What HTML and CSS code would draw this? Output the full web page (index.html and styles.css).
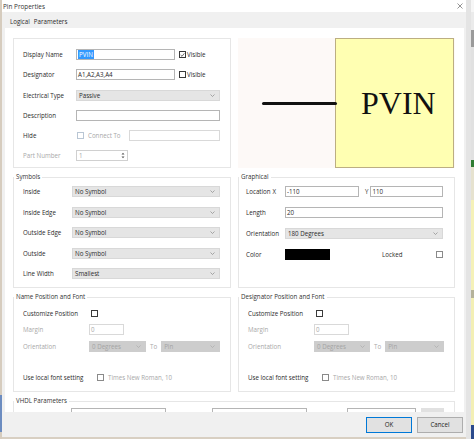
FILE: index.html
```html
<!DOCTYPE html>
<html lang="en">
<head>
    <meta charset="UTF-8">
    <title>Pin Properties</title>
    <link rel="stylesheet" href="styles.css">
</head>
<body>
    <div class="desk-left">
        <div class="bg-tan" style="height:395px"></div>
        <div class="bg-blue" style="height:37px"></div>
        <div class="bg-tan" style="height:7px"></div>
    </div>

    <div class="dialog">
        <div class="titlebar">
            <span>Pin Properties</span>
            <svg class="close" width="6" height="6" viewBox="0 0 6 6"><path d="M0.5 0.5 L5.5 5.5 M5.5 0.5 L0.5 5.5" stroke="#666" stroke-width="0.7"/></svg>
        </div>
        <div class="tabs">
            <span class="tab active">Logical</span>
            <span class="tab">Parameters</span>
        </div>

        <div class="page">
            <div class="layout">
                <!-- main pin fields -->
                <div class="box-main">
                    <span class="lbl">Display Name</span>
                    <div class="fld">
                        <div class="edit w99"><span class="sel">PVIN</span></div>
                        <span class="chk on"><svg width="6" height="6" viewBox="0 0 6 6"><path d="M0.8 3 L2.4 4.6 L5.2 1" fill="none" stroke="#222" stroke-width="0.8"/></svg></span>
                        <span class="chk-txt">Visible</span>
                    </div>

                    <span class="lbl">Designator</span>
                    <div class="fld">
                        <div class="edit w99">A1,A2,A3,A4</div>
                        <span class="chk"></span>
                        <span class="chk-txt">Visible</span>
                    </div>

                    <span class="lbl">Electrical Type</span>
                    <div class="combo"><span>Passive</span><svg width="5" height="3" viewBox="0 0 5 3"><path d="M0.5 0.5 L2.5 2.5 L4.5 0.5" fill="none" stroke="#888" stroke-width="0.7"/></svg></div>

                    <span class="lbl">Description</span>
                    <div class="edit"></div>

                    <span class="lbl">Hide</span>
                    <div class="fld">
                        <span class="chk dis hide-chk"></span>
                        <span class="muted connect">Connect To</span>
                        <div class="edit dis w91"></div>
                    </div>

                    <span class="lbl muted">Part Number</span>
                    <div class="fld">
                        <div class="spin">
                            <span class="muted">1</span>
                            <svg width="6" height="9" viewBox="0 0 6 9"><path d="M1.5 3.5 L3 1.8 L4.5 3.5Z M1.5 5.5 L3 7.2 L4.5 5.5Z" fill="#555"/></svg>
                        </div>
                    </div>
                </div>

                <!-- symbol preview -->
                <div class="preview">
                    <div class="pin-line"></div>
                    <div class="pin-body">PVIN</div>
                </div>

                <fieldset class="group">
                    <legend>Symbols</legend>
                    <div class="rows sym">
                        <span class="lbl">Inside</span>
                        <div class="combo"><span>No Symbol</span><svg width="5" height="3" viewBox="0 0 5 3"><path d="M0.5 0.5 L2.5 2.5 L4.5 0.5" fill="none" stroke="#888" stroke-width="0.7"/></svg></div>
                        <span class="lbl">Inside Edge</span>
                        <div class="combo"><span>No Symbol</span><svg width="5" height="3" viewBox="0 0 5 3"><path d="M0.5 0.5 L2.5 2.5 L4.5 0.5" fill="none" stroke="#888" stroke-width="0.7"/></svg></div>
                        <span class="lbl">Outside Edge</span>
                        <div class="combo"><span>No Symbol</span><svg width="5" height="3" viewBox="0 0 5 3"><path d="M0.5 0.5 L2.5 2.5 L4.5 0.5" fill="none" stroke="#888" stroke-width="0.7"/></svg></div>
                        <span class="lbl">Outside</span>
                        <div class="combo"><span>No Symbol</span><svg width="5" height="3" viewBox="0 0 5 3"><path d="M0.5 0.5 L2.5 2.5 L4.5 0.5" fill="none" stroke="#888" stroke-width="0.7"/></svg></div>
                        <span class="lbl">Line Width</span>
                        <div class="combo"><span>Smallest</span><svg width="5" height="3" viewBox="0 0 5 3"><path d="M0.5 0.5 L2.5 2.5 L4.5 0.5" fill="none" stroke="#888" stroke-width="0.7"/></svg></div>
                    </div>
                </fieldset>

                <fieldset class="group">
                    <legend>Graphical</legend>
                    <div class="rows gfx">
                        <span class="lbl loc"><span>Location</span><span>X</span></span>
                        <div class="fld">
                            <div class="edit w74">-110</div>
                            <span class="y-lbl">Y</span>
                            <div class="edit grow">110</div>
                        </div>
                        <span class="lbl">Length</span>
                        <div class="edit">20</div>
                        <span class="lbl">Orientation</span>
                        <div class="combo"><span>180 Degrees</span><svg width="5" height="3" viewBox="0 0 5 3"><path d="M0.5 0.5 L2.5 2.5 L4.5 0.5" fill="none" stroke="#888" stroke-width="0.7"/></svg></div>
                        <span class="lbl">Color</span>
                        <div class="fld">
                            <span class="swatch"></span>
                            <span class="locked">Locked</span>
                            <span class="chk light push"></span>
                        </div>
                    </div>
                </fieldset>

                <fieldset class="group">
                    <legend>Name Position and Font</legend>
                    <div class="rows pos">
                        <span class="lbl">Customize Position</span>
                        <div class="fld"><span class="chk cust"></span></div>
                        <span class="lbl muted">Margin</span>
                        <div class="fld"><div class="edit dis w35 muted">0</div></div>
                        <span class="lbl muted">Orientation</span>
                        <div class="fld">
                            <div class="combo dis w57"><span>0 Degrees</span><svg width="5" height="3" viewBox="0 0 5 3"><path d="M0.5 0.5 L2.5 2.5 L4.5 0.5" fill="none" stroke="#aaa" stroke-width="0.7"/></svg></div>
                            <span class="muted to">To</span>
                            <div class="combo dis grow"><span>Pin</span><svg width="5" height="3" viewBox="0 0 5 3"><path d="M0.5 0.5 L2.5 2.5 L4.5 0.5" fill="none" stroke="#aaa" stroke-width="0.7"/></svg></div>
                        </div>
                        <span></span><span></span>
                        <span class="lbl">Use local font setting</span>
                        <div class="fld">
                            <span class="chk light font-chk"></span>
                            <span class="muted font-name">Times New Roman, 10</span>
                        </div>
                    </div>
                </fieldset>

                <fieldset class="group">
                    <legend>Designator Position and Font</legend>
                    <div class="rows pos">
                        <span class="lbl">Customize Position</span>
                        <div class="fld"><span class="chk cust"></span></div>
                        <span class="lbl muted">Margin</span>
                        <div class="fld"><div class="edit dis w35 muted">0</div></div>
                        <span class="lbl muted">Orientation</span>
                        <div class="fld">
                            <div class="combo dis w56"><span>0 Degrees</span><svg width="5" height="3" viewBox="0 0 5 3"><path d="M0.5 0.5 L2.5 2.5 L4.5 0.5" fill="none" stroke="#aaa" stroke-width="0.7"/></svg></div>
                            <span class="muted to">To</span>
                            <div class="combo dis grow"><span>Pin</span><svg width="5" height="3" viewBox="0 0 5 3"><path d="M0.5 0.5 L2.5 2.5 L4.5 0.5" fill="none" stroke="#aaa" stroke-width="0.7"/></svg></div>
                        </div>
                        <span></span><span></span>
                        <span class="lbl">Use local font setting</span>
                        <div class="fld">
                            <span class="chk light font-chk"></span>
                            <span class="muted font-name">Times New Roman, 10</span>
                        </div>
                    </div>
                </fieldset>

                <fieldset class="group vhdl">
                    <legend>VHDL Parameters</legend>
                    <div class="vhdl-row">
                        <div class="edit w95"></div>
                        <div class="edit w95 gap46"></div>
                        <div class="edit w69 gap40"></div>
                        <span class="mini-btn"></span>
                    </div>
                </fieldset>
            </div>
        </div>

        <div class="footer">
            <button class="btn default">OK</button>
            <button class="btn">Cancel</button>
        </div>
    </div>

    <div class="desk-right">
        <div class="shade"></div>
        <div class="strip">
            <div style="height:12px;background:#f6f6f6"></div>
            <div style="height:18px;background:#ebebeb"></div>
            <div style="height:17px;background:#9a9a9a"></div>
            <div style="height:113px;background:#e1e1e1"></div>
            <div style="height:7px;background:#2f7d32"></div>
            <div style="height:33px;background:#e6e2cf"></div>
            <div style="height:90px;background:#f5f1b8"></div>
            <div style="height:8px;background:#b5b29a"></div>
            <div style="height:127px;background:#f3efb5"></div>
            <div style="height:14px;background:#2b4a8c"></div>
        </div>
    </div>
</body>
</html>
```

FILE: styles.css
```css
body {
    margin: 0;
    width: 474px;
    height: 439px;
    overflow: hidden;
    display: flex;
    align-items: flex-start;
    background: #d8cfc2;
    font-family: "Open Sans", "Noto Sans", sans-serif;
    font-size: 6.2px;
    color: #2a2a2a;
}
.desk-left {
    width: 2px;
    display: flex;
    flex-direction: column;
}
.bg-tan { background: #d6ccbe; }
.bg-blue { background: #6c8cc0; }
.dialog {
    width: 464px;
    height: 437px;
    background: #f0f0f0;
    display: flex;
    flex-direction: column;
}
.titlebar {
    height: 12px;
    background: #fff;
    display: flex;
    align-items: center;
    justify-content: space-between;
    padding: 0 3px 0 1px;
    font-size: 6.4px;
    color: #333;
}
.tabs {
    height: 16px;
    box-sizing: border-box;
    padding: 6px 0 0 8px;
    display: flex;
    gap: 4px;
    line-height: 8px;
}
.page {
    flex: 1;
    min-height: 0;
    margin: 0 2px 0 3px;
    background: #fff;
    padding: 10px 9px 0 8px;
    overflow: hidden;
}
.layout {
    display: grid;
    grid-template-columns: 218px 217px;
    grid-template-rows: 130px 115px 99px auto;
    column-gap: 7px;
    row-gap: 5px;
}

/* shared controls */
.lbl {
    white-space: nowrap;
    line-height: 11px;
}
.muted { color: #a8a8a8; }
.fld {
    display: flex;
    align-items: center;
    height: 11px;
    white-space: nowrap;
}
.edit {
    height: 11px;
    box-sizing: border-box;
    border: 1px solid #b5b5b5;
    background: #fff;
    padding: 0 1px;
    line-height: 9px;
    white-space: nowrap;
}
.edit.dis { border-color: #d9d9d9; }
.sel {
    background: #3399ff;
    color: #fff;
    padding: 0 1px;
}
.combo {
    height: 11px;
    box-sizing: border-box;
    background: #e5e5e5;
    border: 1px solid #d8d8d8;
    display: flex;
    align-items: center;
    justify-content: space-between;
    padding: 0 4px 0 2px;
    white-space: nowrap;
}
.combo.dis {
    background: #cdcdcd;
    border-color: #cdcdcd;
    color: #a4a4a4;
}
.chk {
    width: 7px;
    height: 7px;
    box-sizing: border-box;
    border: 1px solid #3a3a3a;
    background: #fff;
    display: inline-flex;
    align-items: center;
    justify-content: center;
    flex: none;
}
.chk.dis { border-color: #b9c6d4; }
.chk.light { border-color: #8a8a8a; }
.chk-txt { margin-left: 1px; }
.w99 { width: 99px; margin-right: 4px; }
.w91 { width: 91px; margin-left: auto; }
.w95 { width: 95px; }
.w74 { width: 74px; }
.w69 { width: 69px; }
.w57 { width: 57px; }
.w56 { width: 56px; }
.w35 { width: 35px; }
.grow { flex: 1; }
.push { margin-left: auto; }

/* top-left box */
.box-main {
    border: 1px solid #e6e6e6;
    padding: 10px 10px 0 9px;
    display: grid;
    grid-template-columns: 53px 144px;
    grid-auto-rows: 11px;
    row-gap: 9.3px;
    align-items: center;
    align-content: start;
}
.hide-chk { margin-left: 1px; }
.connect { margin-left: 4px; }
.spin {
    width: 52px;
    height: 11px;
    box-sizing: border-box;
    border: 1px solid #d0d0d0;
    display: flex;
    align-items: center;
    justify-content: space-between;
    padding: 0 1px 0 2px;
}

/* preview */
.preview {
    background: #fdf9f7;
    display: flex;
    align-items: center;
    justify-content: flex-end;
    padding-right: 1px;
}
.pin-line {
    width: 75px;
    height: 3px;
    border-radius: 2px;
    background: #111;
    margin-right: -2px;
    position: relative;
    z-index: 1;
}
.pin-body {
    width: 119px;
    height: 130px;
    box-sizing: border-box;
    background: #ffffb2;
    border: 1px solid #bcae82;
    display: flex;
    align-items: center;
    padding-left: 25px;
    font-family: "Liberation Serif", serif;
    font-size: 32px;
    color: #111;
}

/* group boxes */
.group {
    margin: 0;
    padding: 0;
    border: 1px solid #e6e6e6;
    min-width: 0;
}
.group legend {
    padding: 0 2px;
    line-height: 8px;
    color: #333;
}
.rows {
    display: grid;
    grid-auto-rows: 11px;
    row-gap: 9.5px;
    align-items: center;
}
.sym {
    grid-template-columns: 49px 148px;
    padding: 5px 10px 0 9px;
}
.gfx {
    grid-template-columns: 39px 158px;
    padding: 5px 11px 0 7px;
    row-gap: 10px;
}
.loc {
    display: flex;
    justify-content: space-between;
    padding-right: 9px;
}
.y-lbl { margin: 0 2px 0 6px; }
.swatch {
    width: 45px;
    height: 11px;
    background: #000;
}
.locked { margin-left: 52px; }
.pos {
    grid-template-columns: 66px 1fr;
    grid-template-rows: 11px 11px 11px 9px 11px;
    row-gap: 5.5px;
    padding: 6.5px 10px 0 9px;
}
.cust { margin-left: 2px; }
.to { margin: 0 4px; }
.font-chk { margin-left: 8px; }
.font-name { margin-left: 4px; }
.vhdl { grid-column: 1 / -1; }
.vhdl-row {
    display: flex;
    padding: 3px 0 0 57px;
}
.vhdl-row .edit { height: 12px; }
.gap46 { margin-left: 46px; }
.gap40 { margin-left: 40px; }
.mini-btn {
    width: 23px;
    height: 12px;
    margin-left: 5px;
    background: #e1e1e1;
}

/* footer */
.footer {
    height: 25px;
    flex: none;
    display: flex;
    justify-content: flex-end;
    align-items: center;
    gap: 5px;
    padding-right: 3px;
}
.btn {
    width: 46px;
    height: 16px;
    padding: 0;
    border: 1px solid #adadad;
    background: #e1e1e1;
    font: inherit;
    color: #222;
}
.btn.default { border-color: #0078d7; }

.desk-right {
    width: 8px;
    height: 439px;
    display: flex;
}
.shade {
    width: 5px;
    background: #e4e4e4;
}
.strip {
    width: 3px;
    display: flex;
    flex-direction: column;
}
```
